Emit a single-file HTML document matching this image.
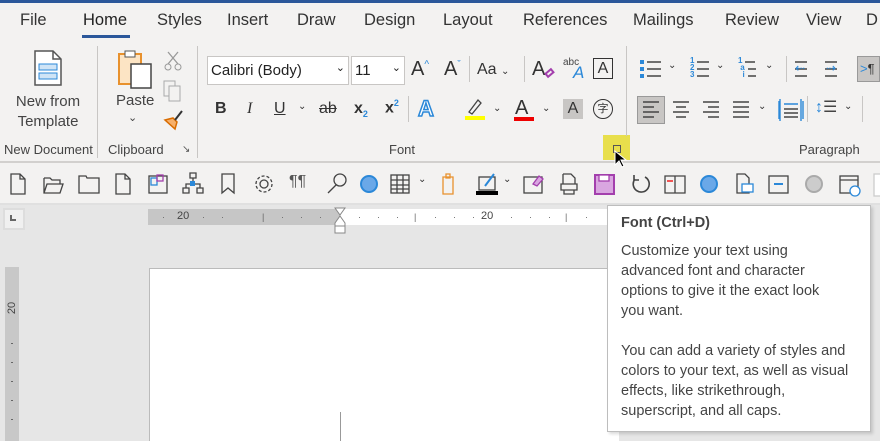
<!DOCTYPE html>
<html><head><meta charset="utf-8"><style>
*{margin:0;padding:0;box-sizing:border-box}
body{width:880px;height:441px;overflow:hidden;position:relative;background:#e6e6e6;font-family:"Liberation Sans",sans-serif;color:#333}
.a{position:absolute}
.t{position:absolute;top:11px;font-size:16.5px;color:#333;white-space:nowrap}
.lbl{position:absolute;top:142px;font-size:13px;color:#444;white-space:nowrap}
.sep{position:absolute;width:1px;background:#c8c6c4}
.ic{position:absolute;font-size:16px;color:#333}
svg{position:absolute;overflow:visible}
</style></head><body>
<div class="a" style="left:0;top:0;width:880px;height:3px;background:#2b579a"></div>
<div class="a" style="left:0;top:3px;width:880px;height:158px;background:#f3f2f1"></div>
<div class="a" style="left:0;top:161px;width:880px;height:2px;background:#d2d0ce"></div>
<div class="a" style="left:0;top:163px;width:880px;height:40px;background:#f3f2f1"></div>
<div class="a" style="left:0;top:203px;width:880px;height:2px;background:#e0e0e0"></div>

<div class="t" style="left:20px">File</div>
<div class="t" style="left:83px;color:#222">Home</div>
<div class="a" style="left:82px;top:35px;width:48px;height:3px;background:#2b579a"></div>
<div class="t" style="left:157px">Styles</div>
<div class="t" style="left:227px">Insert</div>
<div class="t" style="left:297px">Draw</div>
<div class="t" style="left:364px">Design</div>
<div class="t" style="left:443px">Layout</div>
<div class="t" style="left:523px">References</div>
<div class="t" style="left:633px">Mailings</div>
<div class="t" style="left:725px">Review</div>
<div class="t" style="left:806px">View</div>
<div class="t" style="left:866px">D</div>

<!-- New doc -->
<svg style="left:33px;top:50px" width="30" height="36"><path d="M2 1h18l8 8v26H2z" fill="#fff" stroke="#555" stroke-width="1.5"/><path d="M20 1v8h8" fill="none" stroke="#555" stroke-width="1.5"/><rect x="6" y="14" width="18" height="6" fill="#cfe4f6" stroke="#2b88d8"/><rect x="6" y="23" width="18" height="6" fill="#cfe4f6" stroke="#2b88d8"/></svg>
<div class="a" style="left:15px;top:92px;font-size:15px;color:#444;line-height:20px;text-align:center;width:66px">New from Template</div>
<div class="lbl" style="left:4px">New Document</div>
<div class="sep" style="left:97px;top:46px;height:112px"></div>
<!-- clipboard -->
<svg style="left:118px;top:50px" width="36" height="40"><rect x="1" y="4" width="22" height="30" fill="#fce4c4" stroke="#e8912d" stroke-width="2"/><rect x="7" y="1" width="10" height="6" fill="#fff" stroke="#555"/><rect x="13" y="14" width="20" height="24" fill="#fff" stroke="#444" stroke-width="1.5"/></svg>
<div class="a" style="left:116px;top:92px;font-size:15px;color:#444">Paste</div>
<div class="a" style="left:128px;top:111px;font-size:11px;color:#444">⌄</div>
<svg style="left:164px;top:51px" width="18" height="20"><path d="M4 1l10 12M14 1L4 13" stroke="#999" stroke-width="1.3" fill="none"/><circle cx="4" cy="16" r="3" fill="none" stroke="#999"/><circle cx="14" cy="16" r="3" fill="none" stroke="#999"/></svg>
<svg style="left:163px;top:80px" width="20" height="22"><rect x="1" y="1" width="11" height="15" fill="none" stroke="#aaa"/><rect x="6" y="6" width="11" height="15" fill="#f3f2f1" stroke="#aaa"/></svg>
<svg style="left:163px;top:108px" width="22" height="22"><path d="M2 12l8-2 4 4-2 7z" fill="#f7b06a" stroke="#d96c00" stroke-width="1.5"/><path d="M12 12l7-9" stroke="#333" stroke-width="2"/></svg>
<div class="lbl" style="left:108px">Clipboard</div>
<div class="a" style="left:182px;top:144px;font-size:10px;color:#555">↘</div>
<div class="sep" style="left:197px;top:46px;height:112px"></div>
<!-- font -->
<div class="a" style="left:207px;top:56px;width:142px;height:29px;background:#fff;border:1px solid #c8c6c4;font-size:15px;padding:5px 3px;color:#222">Calibri (Body)<span style="position:absolute;right:3px;top:4px;font-size:11px">⌄</span></div>
<div class="a" style="left:351px;top:56px;width:54px;height:29px;background:#fff;border:1px solid #c8c6c4;font-size:15px;padding:5px 3px;color:#222">11<span style="position:absolute;right:3px;top:4px;font-size:11px">⌄</span></div>
<div class="ic" style="left:411px;top:58px;font-size:20px">A<sup style="font-size:10px;color:#2b88d8">^</sup></div>
<div class="ic" style="left:444px;top:58px;font-size:20px">A<sup style="font-size:10px;color:#2b88d8">ˇ</sup></div>
<div class="sep" style="left:469px;top:56px;height:26px"></div>
<div class="ic" style="left:477px;top:61px;font-size:16px">Aa <span style="font-size:10px">⌄</span></div>
<div class="sep" style="left:524px;top:56px;height:26px"></div>
<div class="ic" style="left:532px;top:58px;font-size:20px">A</div><div class="a" style="left:545px;top:70px;width:9px;height:6px;border:2px solid #a33fad;transform:rotate(-40deg)"></div>
<div class="a" style="left:563px;top:57px;font-size:10px;color:#444">abc</div><div class="ic" style="left:573px;top:63px;font-size:17px;color:#2b88d8;font-style:italic">A</div>
<div class="a" style="left:593px;top:58px;width:20px;height:21px;border:1.5px solid #333;font-size:16px;text-align:center;line-height:19px">A</div>
<div class="ic" style="left:215px;top:100px;font-weight:bold">B</div>
<div class="ic" style="left:247px;top:100px;font-style:italic;font-family:'Liberation Serif'">I</div>
<div class="ic" style="left:274px;top:100px;text-decoration:underline">U</div>
<div class="a" style="left:298px;top:101px;font-size:10px">⌄</div>
<div class="ic" style="left:319px;top:100px;text-decoration:line-through">ab</div>
<div class="ic" style="left:354px;top:100px;font-weight:bold">x<sub style="font-size:9px;color:#2b88d8">2</sub></div>
<div class="ic" style="left:385px;top:98px;font-weight:bold">x<sup style="font-size:9px;color:#2b88d8">2</sup></div>
<div class="sep" style="left:408px;top:96px;height:26px"></div>
<div class="ic" style="left:418px;top:96px;font-size:22px;font-weight:bold;color:#fff;-webkit-text-stroke:1.5px #2b88d8">A</div>
<svg style="left:465px;top:98px" width="20" height="22"><path d="M4 14l9-12 3 3-9 11z" fill="none" stroke="#444" stroke-width="1.3"/><rect x="0" y="18" width="20" height="4" fill="#ff0"/></svg>
<div class="a" style="left:493px;top:103px;font-size:10px">⌄</div>
<div class="ic" style="left:515px;top:97px;font-size:20px">A</div><div class="a" style="left:514px;top:117px;width:20px;height:4px;background:#e00"></div>
<div class="a" style="left:542px;top:103px;font-size:10px">⌄</div>
<div class="a" style="left:563px;top:99px;width:20px;height:20px;background:#c8c6c4;font-size:16px;text-align:center;line-height:20px">A</div>
<div class="a" style="left:593px;top:99px;width:20px;height:20px;border:1.5px solid #333;border-radius:50%;font-size:11px;text-align:center;line-height:17px;font-family:'Noto Sans CJK SC',sans-serif">字</div>
<div class="lbl" style="left:389px">Font</div>
<div class="a" style="left:603px;top:135px;width:27px;height:25px;background:#e8df4c"></div>
<div class="a" style="left:613px;top:145px;width:8px;height:8px;border:1px solid #555"></div>
<svg style="left:614px;top:150px" width="12" height="20"><path d="M1 1v14l4-4 3 6 2-1-3-6h5z" fill="#000" stroke="#fff" stroke-width="1"/></svg>
<div class="sep" style="left:626px;top:46px;height:90px"></div>
<!-- paragraph -->
<svg style="left:640px;top:60px" width="170" height="20" fill="none" stroke="#444" stroke-width="1.5"><rect x="0" y="0" width="4" height="4" fill="#2b88d8" stroke="none"/><rect x="0" y="7" width="4" height="4" fill="#2b88d8" stroke="none"/><rect x="0" y="14" width="4" height="4" fill="#2b88d8" stroke="none"/><path d="M7 2h14M7 9h14M7 16h14M57 2h12M57 9h12M57 16h12M105 2h10M108 9h8M108 16h8M155 2h12M155 9h12M155 16h12M185 2h12M185 9h12M185 16h12"/></svg>
<div class="a" style="left:668px;top:60px;font-size:10px">⌄</div>
<div class="a" style="left:690px;top:57px;font-size:8px;font-weight:bold;color:#2b88d8;line-height:7px">1<br>2<br>3</div>
<div class="a" style="left:716px;top:60px;font-size:10px">⌄</div>
<div class="a" style="left:738px;top:57px;font-size:8px;font-weight:bold;color:#2b88d8;line-height:7px">1<br>&nbsp;a<br>&nbsp;&nbsp;i</div>
<div class="a" style="left:765px;top:60px;font-size:10px">⌄</div>
<div class="sep" style="left:786px;top:56px;height:26px"></div>
<div class="a" style="left:795px;top:61px;color:#2b88d8;font-size:12px">⇠</div>
<div class="a" style="left:826px;top:61px;color:#2b88d8;font-size:12px">⇢</div>
<div class="a" style="left:857px;top:56px;width:23px;height:26px;background:#c8c6c4;border:1px solid #999;font-size:13px;padding:4px 2px"><span style="color:#2b88d8">&gt;</span>¶</div>
<div class="a" style="left:637px;top:96px;width:28px;height:28px;background:#c8c6c4;border:1px solid #999"></div>
<svg style="left:643px;top:101px" width="140" height="18" fill="none" stroke="#444" stroke-width="1.4"><path d="M0 1h16M0 6h11M0 11h16M0 16h11M30 1h16M33 6h10M30 11h16M33 16h10M60 1h16M65 6h11M60 11h16M65 16h11M90 1h16M90 6h16M90 11h16M90 16h16"/><path d="M136 0v18M160 0v18" stroke="#2b88d8"/></svg>
<div class="a" style="left:758px;top:101px;font-size:10px">⌄</div>
<svg style="left:779px;top:99px" width="24" height="22" fill="none" stroke-width="1.4"><path d="M1 0v22M22 0v22M5 5h14" stroke="#2b88d8"/><path d="M5 10h14M5 14h14M5 18h14" stroke="#444"/></svg>
<div class="sep" style="left:807px;top:96px;height:26px"></div>
<div class="a" style="left:815px;top:97px;font-size:16px;color:#2b88d8">↕<span style="color:#444">☰</span></div>
<div class="a" style="left:844px;top:101px;font-size:10px">⌄</div>
<div class="sep" style="left:862px;top:96px;height:26px"></div>
<div class="lbl" style="left:799px">Paragraph</div>

<!-- quick toolbar -->
<svg style="left:0;top:170px" width="880" height="28" fill="none" stroke="#444" stroke-width="1.3">
<path d="M11 4h9l5 5v15H11zM20 4v5h5"/>
<path d="M44 8h6l2 2h8v4M44 8v15h16l3-9H47l-3 9"/>
<path d="M79 6h7l1 2h12v15H79z"/>
<path d="M116 4h9l5 5v15h-14zM125 4v5h5"/>
<rect x="149" y="6" width="18" height="17"/><rect x="151" y="8" width="6" height="7" stroke="#2b88d8"/><rect x="157" y="5" width="6" height="6" stroke="#a33fad"/>
<path d="M190 3h6v5h-6zM183 18h6v5h-6zM197 18h6v5h-6zM193 8v5M186 18v-4h14v4"/><rect x="190" y="11" width="5" height="5" fill="#2b88d8" stroke="none"/>
<path d="M222 4h12v19l-6-5-6 5z"/>
<circle cx="264" cy="14" r="4"/><circle cx="264" cy="14" r="8" stroke-dasharray="3 2"/>
<circle cx="340" cy="10" r="6"/><path d="M336 15l-8 8"/>
<circle cx="369" cy="14" r="8" fill="#6aa8e8" stroke="#2b88d8" stroke-width="2"/>
<rect x="391" y="5" width="18" height="18"/><path d="M391 10h18M391 15h18M391 19h18M397 5v18M403 5v18"/>
<path d="M443 7h10v17h-10z M446 4h4v4h-4z" stroke="#e8912d"/>
<rect x="479" y="7" width="16" height="13"/><path d="M485 16l9-12" stroke="#2b88d8" stroke-width="2"/><rect x="476" y="21" width="22" height="4" fill="#000" stroke="none"/>
<rect x="524" y="7" width="18" height="16"/><path d="M533 14l6-8 4 3-6 7z" fill="#d9a6e0" stroke="#a33fad"/>
<path d="M563 4h8l4 4v6M563 4v10M561 14h16v6h-16zM564 20v4h10v-4"/>
<rect x="595" y="5" width="19" height="19" fill="#d9a6e0" stroke="#a33fad" stroke-width="2"/><rect x="599" y="5" width="10" height="6" fill="#fff" stroke="#a33fad"/>
<path d="M645 7a8 8 0 1 1-10 2M634 5v5h5" stroke-width="1.6"/>
<path d="M665 6h10v17h-10zM675 6h10v17h-10z"/><path d="M667 11h6" stroke="#e00"/>
<circle cx="709" cy="14" r="8" fill="#6aa8e8" stroke="#2b88d8" stroke-width="2"/>
<path d="M737 4h8l4 4v15h-12z"/><rect x="742" y="14" width="11" height="8" fill="#fff" stroke="#2b88d8"/>
<rect x="769" y="6" width="19" height="17"/><path d="M774 14h9" stroke="#2b88d8" stroke-width="2"/>
<circle cx="814" cy="14" r="8" fill="#ccc" stroke="#aaa" stroke-width="2"/>
<rect x="840" y="6" width="18" height="17"/><path d="M840 10h18"/><circle cx="855" cy="21" r="5" fill="#fff" stroke="#2b88d8"/>
<rect x="874" y="4" width="10" height="22" fill="#fff" stroke="#ccc"/>
</svg>
<div class="a" style="left:289px;top:173px;font-size:16px;color:#555">¶¶</div>
<div class="a" style="left:418px;top:174px;font-size:10px">⌄</div>
<div class="a" style="left:503px;top:174px;font-size:10px">⌄</div>

<!-- rulers -->
<div class="a" style="left:3px;top:208px;width:22px;height:22px;background:#f0f0f0;border:2px solid #ddd"></div>
<div class="a" style="left:10px;top:215px;width:6px;height:6px;border-left:2px solid #666;border-bottom:2px solid #666"></div>
<div class="a" style="left:148px;top:209px;width:192px;height:16px;background:#c6c6c6"></div>
<div class="a" style="left:340px;top:209px;width:267px;height:16px;background:#fff"></div>
<div class="a" style="left:177px;top:210px;font-size:11px;color:#444">20</div>
<div class="a" style="left:481px;top:210px;font-size:11px;color:#444">20</div>
<div class="a" style="left:155px;top:209px;width:450px;height:16px;font-size:9px;color:#666;white-space:nowrap;line-height:16px"><span style="position:absolute;left:7px">·</span><span style="position:absolute;left:47px">·</span><span style="position:absolute;left:66px">·</span><span style="position:absolute;left:107px">|</span><span style="position:absolute;left:126px">·</span><span style="position:absolute;left:145px">·</span><span style="position:absolute;left:164px">·</span><span style="position:absolute;left:203px">·</span><span style="position:absolute;left:222px">·</span><span style="position:absolute;left:241px">·</span><span style="position:absolute;left:259px">|</span><span style="position:absolute;left:279px">·</span><span style="position:absolute;left:298px">·</span><span style="position:absolute;left:317px">·</span><span style="position:absolute;left:355px">·</span><span style="position:absolute;left:374px">·</span><span style="position:absolute;left:393px">·</span><span style="position:absolute;left:410px">|</span><span style="position:absolute;left:430px">·</span></div>
<svg style="left:333px;top:206px" width="14" height="34"><path d="M2 2h10l-5 7zM2 17l5-7 5 7v3H2zM2 20h10v7H2z" fill="#fff" stroke="#888"/></svg>
<div class="a" style="left:5px;top:267px;width:14px;height:174px;background:#c8c8c8"></div>
<div class="a" style="left:6px;top:302px;font-size:11px;color:#444;transform:rotate(-90deg)">20</div>
<div class="a" style="left:11px;top:325px;width:2px;height:110px;background:repeating-linear-gradient(#c8c8c8 0 18px,#666 18px 19px)"></div>

<div class="a" style="left:149px;top:268px;width:470px;height:173px;background:#fff;border-left:1px solid #bbb;border-top:1px solid #bbb"></div>
<div class="a" style="left:340px;top:412px;width:1px;height:29px;background:#999"></div>

<!-- tooltip -->
<div class="a" style="left:607px;top:205px;width:264px;height:227px;background:#fff;border:1px solid #bdbdbd;box-shadow:2px 2px 3px rgba(0,0,0,.15);padding:7px 13px;font-size:14.5px;line-height:20px;color:#444;white-space:nowrap">
<div style="font-weight:bold;margin-bottom:8px">Font (Ctrl+D)</div>
<div>Customize your text using<br>advanced font and character<br>options to give it the exact look<br>you want.</div>
<div style="margin-top:20px">You can add a variety of styles and<br>colors to your text, as well as visual<br>effects, like strikethrough,<br>superscript, and all caps.</div>
</div>
</body></html>
